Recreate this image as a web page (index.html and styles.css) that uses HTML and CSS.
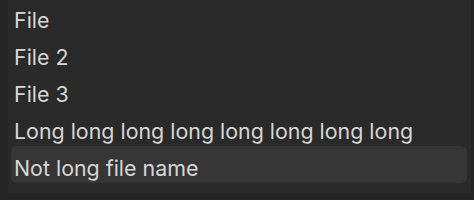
FILE: index.html
```html
<!DOCTYPE html>
<html lang="en">

<head>
    <meta charset="UTF-8">
    <title>Files</title>
    <link rel="stylesheet" href="styles.css">
</head>

<body>
    <div class="panel">
        <ul class="file-list">
            <li class="file">File</li>
            <li class="file">File 2</li>
            <li class="file">File 3</li>
            <li class="file">Long long long long long long long long long file name</li>
            <li class="file selected">Not long file name</li>
        </ul>
    </div>
</body>

</html>
```

FILE: styles.css
```css
body {
    margin: 0;
    background-color: #252525;
    font-family: "Inter", "Liberation Sans", sans-serif;
}

.panel {
    height: 193px;
    margin-left: 8px;
    margin-right: 3px;
    background-color: #2a2a2a;
    overflow: hidden;
}

.file-list {
    list-style: none;
    margin: -2px 0 0 0;
    padding: 0;
}

.file {
    height: 37px;
    box-sizing: border-box;
    margin: 0 4px 0 3px;
    padding: 10px 12px 0 3px;
    font-size: 21.4px;
    line-height: 24px;
    color: #d6d6d6;
    border-radius: 6px;
    overflow: hidden;
}

.file.selected {
    background-color: #363636;
}
```
